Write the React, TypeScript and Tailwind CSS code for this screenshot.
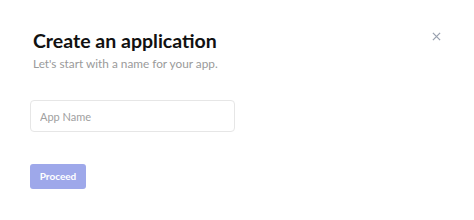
import React from 'react';

const App: React.FC = () => {
  return (
    <div className="w-[474px] h-[220px] bg-white relative" style={{ fontFamily: 'Lato, "Noto Sans", sans-serif' }}>
      {/* Close button */}
      <button className="absolute top-[32px] right-[33px] text-gray-400 cursor-pointer" aria-label="Close">
        <svg width="9" height="9" viewBox="0 0 10 10" fill="none" stroke="currentColor" strokeWidth="1.4">
          <path d="M1 1L9 9M9 1L1 9" />
        </svg>
      </button>

      <div className="pl-[33px] pt-[29px]">
        <h1 className="text-[19.5px] font-bold text-[#111] leading-[24px]">Create an application</h1>
        <p className="text-[11.8px] text-[#9a9a9a] leading-[16px] mt-[3px]">Let's start with a name for your app.</p>
      </div>

      <div className="pl-[30px] mt-[28px]">
        <input
          type="text"
          placeholder="App Name"
          className="w-[205px] h-[32px] border border-[#e6e6e6] rounded-[4px] px-[9px] text-[11px] text-gray-700 placeholder:text-[#a0a0a0] outline-none"
        />
      </div>

      <div className="pl-[30px] mt-[30px]">
        <button className="w-[56px] h-[25px] bg-[#9ea8ea] rounded-[3px] text-white text-[10px] font-bold">Proceed</button>
      </div>
    </div>
  );
};

export default App;
